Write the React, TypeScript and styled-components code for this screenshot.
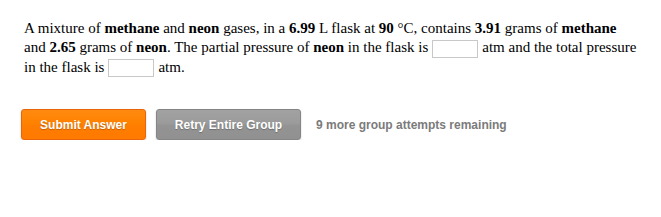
import React from "react";
import styled, { createGlobalStyle } from "styled-components";

const GlobalStyle = createGlobalStyle`
  html, body {
    margin: 0;
    padding: 0;
    background: #ffffff;
  }
`;

const Page = styled.div`
  padding: 19px 24px 0 24px;
`;

const Question = styled.p`
  margin: 0;
  width: 616px;
  font-family: "Liberation Serif", "Times New Roman", serif;
  font-size: 15px;
  line-height: 19px;
  color: #000;
  b {
    font-weight: bold;
  }
`;

const Blank = styled.input`
  box-sizing: border-box;
  width: 46px;
  height: 18px;
  margin: 0 4px;
  padding: 0 2px;
  border: 1px solid #c8c8c8;
  background: #fff;
  vertical-align: middle;
  font-family: "Liberation Serif", serif;
  font-size: 14px;
  outline: none;
`;

const Actions = styled.div`
  display: flex;
  align-items: center;
  gap: 10px;
  margin-top: 32px;
  margin-left: -3px;
`;

const Button = styled.button<{ $variant: "primary" | "secondary" }>`
  box-sizing: border-box;
  height: 31px;
  padding: 0;
  white-space: nowrap;
  border-radius: 3px;
  border: 1px solid
    ${(p) => (p.$variant === "primary" ? "#e8650a" : "#858585")};
  background: ${(p) =>
    p.$variant === "primary"
      ? "linear-gradient(#ff8a10 0%, #ff8200 45%, #ff7d00 55%, #ff7a00 100%)"
      : "linear-gradient(#a2a2a2 0%, #9b9b9b 45%, #939393 55%, #919191 100%)"};
  color: #ffffff;
  font-family: "Liberation Sans", Arial, sans-serif;
  font-size: 12px;
  font-weight: bold;
  text-shadow: 0 1px 1px rgba(0, 0, 0, 0.25);
  box-shadow: 0 1px 2px rgba(0, 0, 0, 0.2);
  cursor: pointer;
  width: ${(p) => (p.$variant === "primary" ? "125px" : "145px")};
`;

const Remaining = styled.span`
  margin-left: 5px;
  font-family: "Liberation Sans", Arial, sans-serif;
  font-size: 12px;
  font-weight: bold;
  color: #7b7b7b;
`;

export default function App() {
  return (
    <>
      <GlobalStyle />
      <Page>
        <Question>
          A mixture of <b>methane</b> and <b>neon</b> gases, in a <b>6.99</b> L
          flask at <b>90</b> °C, contains <b>3.91</b> grams of <b>methane</b>{" "}
          and <b>2.65</b> grams of <b>neon</b>. The partial pressure of{" "}
          <b>neon</b> in the flask is
          <Blank type="text" aria-label="partial pressure" />
          atm and the total pressure in the flask is
          <Blank type="text" aria-label="total pressure" />
          atm.
        </Question>
        <Actions>
          <Button $variant="primary">Submit Answer</Button>
          <Button $variant="secondary">Retry Entire Group</Button>
          <Remaining>9 more group attempts remaining</Remaining>
        </Actions>
      </Page>
    </>
  );
}
